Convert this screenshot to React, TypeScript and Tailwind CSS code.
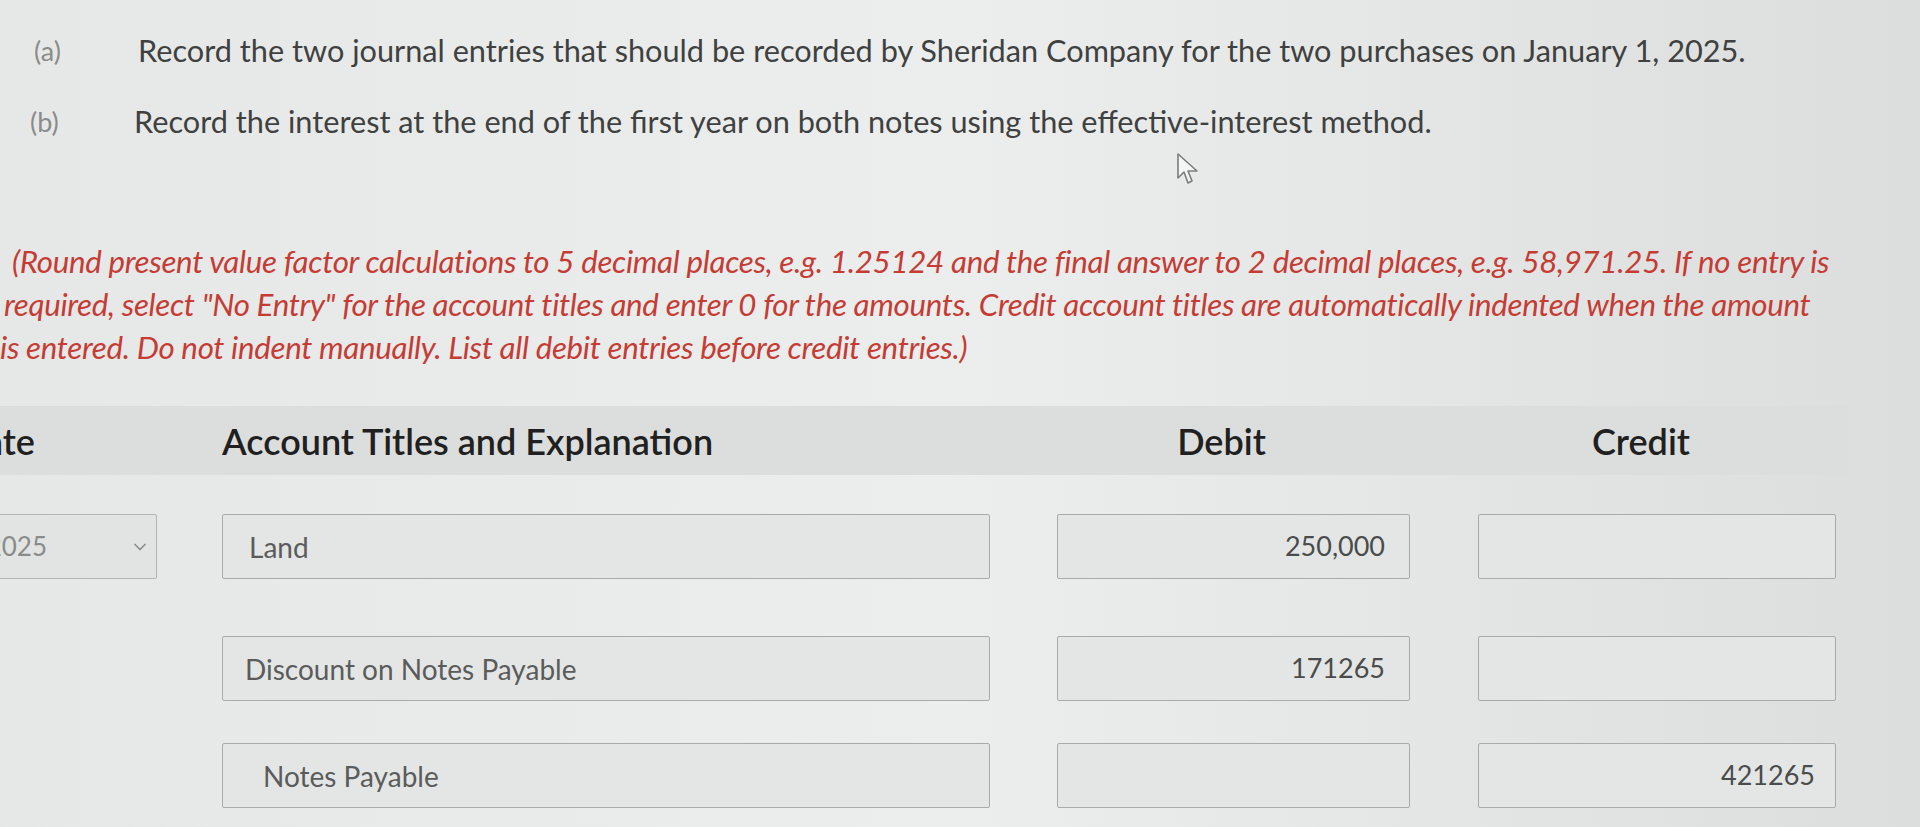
import { ChevronDown } from 'lucide-react';

type Row = {
  account: string;
  debit?: string;
  credit?: string;
  date?: string;
  indent?: string;
  spacing: string;
};

const rows: Row[] = [
  { date: '1/1/2025', account: 'Land', debit: '250,000', spacing: 'mt-[39px]', indent: 'pl-[26px]' },
  { account: 'Discount on Notes Payable', debit: '171265', spacing: 'mt-[57px]', indent: 'pl-[22px]' },
  { account: 'Notes Payable', credit: '421265', spacing: 'mt-[42px]', indent: 'pl-[40px]' },
];

function Field({ value, pad = 'pr-6' }: { value?: string; pad?: string }) {
  return (
    <div
      className={`flex h-[65px] items-center justify-end rounded-[2px] border-[1.5px] border-[#a9abaa] bg-[#e4e6e5] text-[27px] text-[#4a4c4b] ${pad}`}
    >
      {value}
    </div>
  );
}

function Cursor() {
  return (
    <svg className="absolute left-[1176px] top-[152px]" width="26" height="34" viewBox="0 0 26 34">
      <path
        d="M2 2 L2 26 L8 20 L12 31 L16 29 L12 19 L21 19 Z"
        fill="#f4f5f5"
        stroke="#7b7d7c"
        strokeWidth="1.6"
        strokeLinejoin="round"
      />
    </svg>
  );
}

export default function App() {
  return (
    <div className="relative h-[827px] w-[1920px] overflow-hidden bg-gradient-to-r from-[#e6e8e7] via-[#eceeed] to-[#dcdedd] font-['Lato',sans-serif]">
      <div className="pt-[33px]">
        <div className="flex items-center text-[30.7px] leading-[36px] text-[#3f4140]">
          <span className="w-[138px] pl-[34px] text-[27px] text-[#8a8c8b]">(a)</span>
          <span>Record the two journal entries that should be recorded by Sheridan Company for the two purchases on January 1, 2025.</span>
        </div>
        <div className="mt-[35px] flex items-center text-[30.7px] leading-[36px] text-[#3f4140]">
          <span className="w-[134px] pl-[30px] text-[27px] text-[#8a8c8b]">(b)</span>
          <span>Record the interest at the end of the first year on both notes using the effective-interest method.</span>
        </div>
      </div>

      <Cursor />

      <div className="mt-[100px] whitespace-nowrap pl-[12px] text-[31.3px] italic leading-[43px] tracking-[-0.01em] text-[#c53c35]">
        <div>
          (Round present value factor calculations to 5 decimal places, e.g. 1.25124 and the final answer to 2 decimal places, e.g. 58,971.25. If no entry is
        </div>
        <div className="-ml-[8px]">
          required, select "No Entry" for the account titles and enter 0 for the amounts. Credit account titles are automatically indented when the amount
        </div>
        <div className="-ml-[12px]">is entered. Do not indent manually. List all debit entries before credit entries.)</div>
      </div>

      <div className="mt-[37px] w-[1849px]">
        <div className="flex h-[69px] items-center whitespace-nowrap bg-[#dcdedd] text-[36px] font-semibold text-[#1f2120]">
          <div className="-ml-[42px] w-[199px]">Date</div>
          <div className="ml-[65px] w-[768px]">Account Titles and Explanation</div>
          <div className="ml-[67px] w-[353px] pr-6 text-center">Debit</div>
          <div className="ml-[68px] w-[358px] pr-8 text-center">Credit</div>
        </div>

        {rows.map((row, i) => (
          <div key={i} className={`flex ${row.spacing}`}>
            <div className="-ml-[100px] w-[257px]">
              {row.date && (
                <div className="flex h-[65px] items-center justify-between rounded-[2px] border-[1.5px] border-[#b3b5b4] bg-[#e2e4e3] pl-[32px] pr-[6px] text-[26px] text-[#8a8c8b]">
                  <span>{row.date}</span>
                  <ChevronDown className="h-5 w-5 text-[#8a8c8b]" strokeWidth={2} />
                </div>
              )}
            </div>
            <div className="ml-[65px] w-[768px]">
              <div className={`flex h-[65px] items-center rounded-[2px] border-[1.5px] border-[#a9abaa] bg-[#e4e6e5] text-[28px] text-[#5a5c5b] ${row.indent}`}>
                {row.account}
              </div>
            </div>
            <div className="ml-[67px] w-[353px]">
              <Field value={row.debit} />
            </div>
            <div className="ml-[68px] w-[358px]">
              <Field value={row.credit} pad="pr-5" />
            </div>
          </div>
        ))}
      </div>
    </div>
  );
}
